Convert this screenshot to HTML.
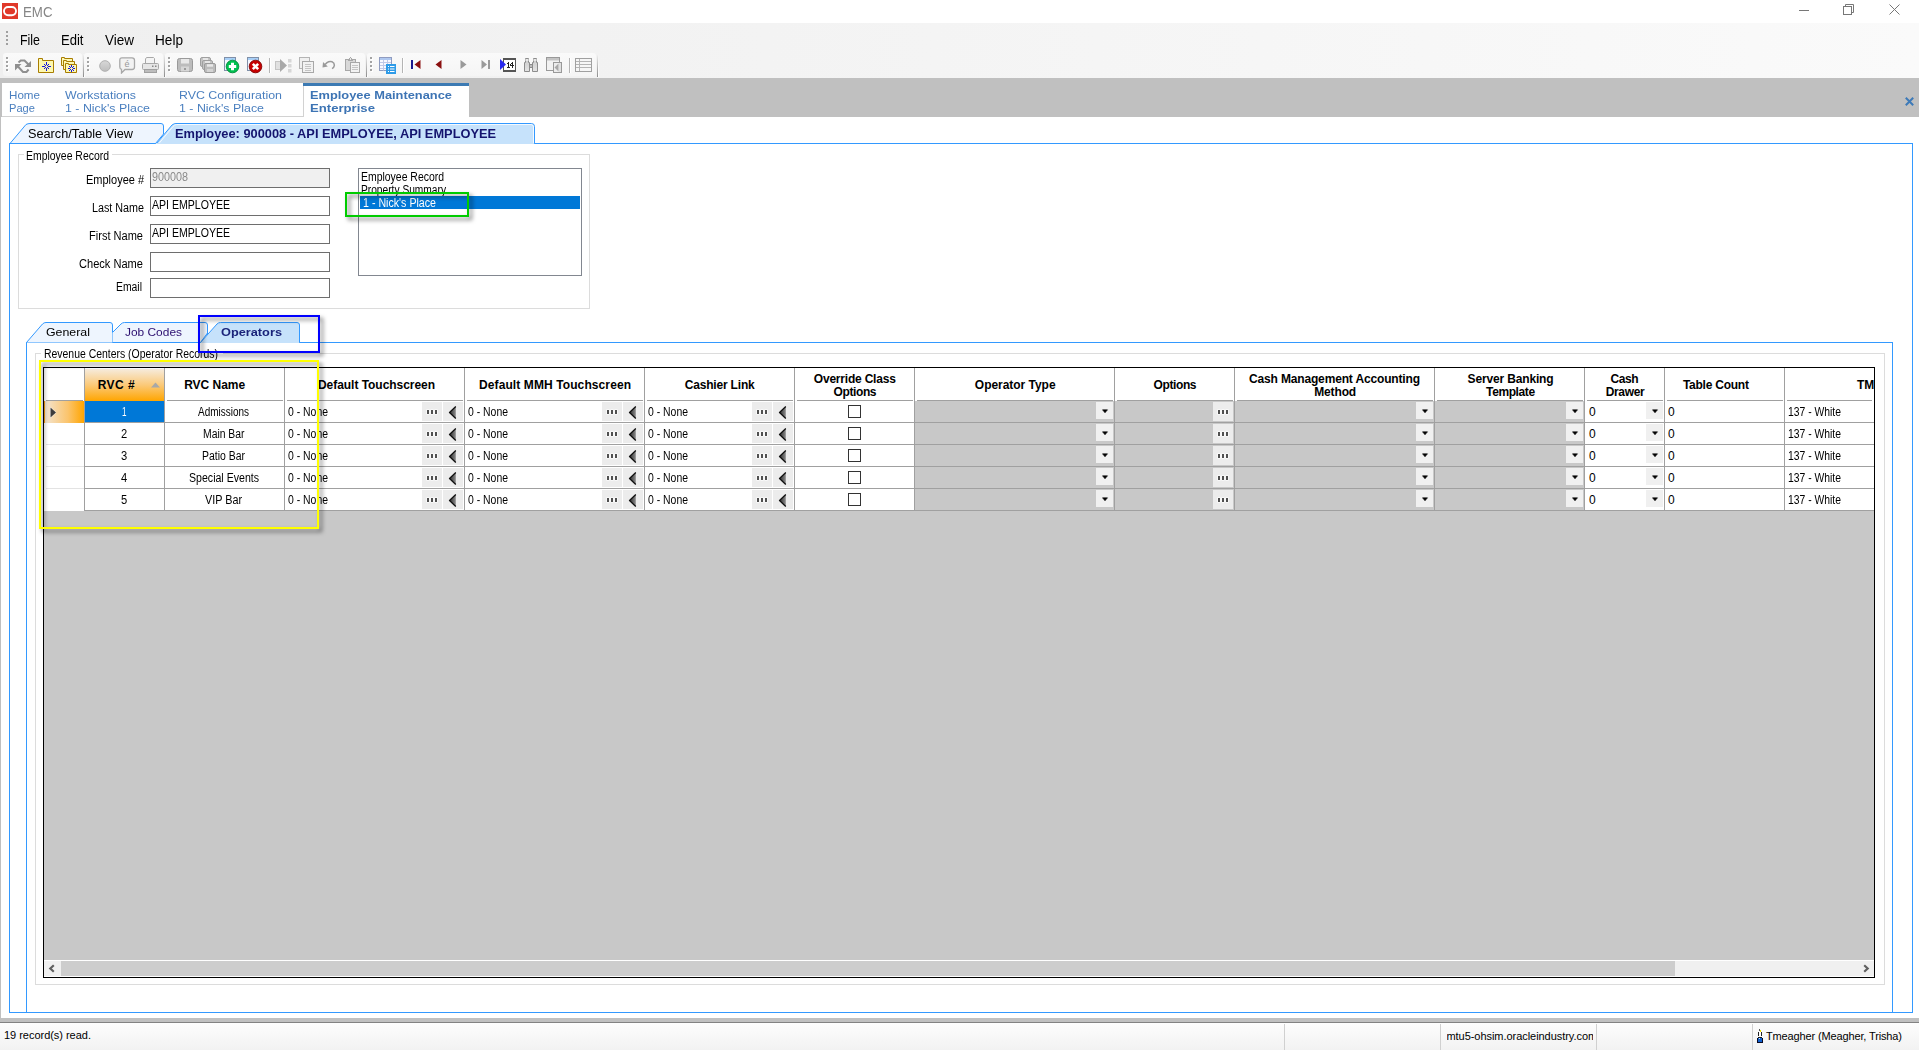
<!DOCTYPE html>
<html><head><meta charset="utf-8"><style>
html,body{margin:0;padding:0;width:1919px;height:1050px;overflow:hidden;background:#fff}
body{position:relative;font-family:"Liberation Sans",sans-serif}
div,span,svg{position:absolute}
.t{white-space:pre;line-height:1;font-family:"Liberation Sans",sans-serif}
</style></head><body>
<div style="left:0px;top:0px;width:1919px;height:23px;background:#fff"></div>
<svg style="position:absolute;left:2px;top:3px" width="16" height="16"><rect x="0" y="0" width="16" height="16" fill="#e0382a"/><rect x="2" y="4" width="12" height="8.2" rx="4.1" fill="none" stroke="#fff" stroke-width="1.9"/></svg>
<span class="t" style="left:23.00px;top:4px;font-size:15px;color:#858585;transform:scaleX(0.8851);transform-origin:0 0;">EMC</span>
<div style="left:1799px;top:10px;width:10px;height:1px;background:#777"></div>
<svg style="position:absolute;left:1843px;top:4px" width="12" height="12"><rect x="0.5" y="2.5" width="8" height="8" fill="none" stroke="#777"/><path d="M2.5 2.5V0.5H10.5V8.5H8.5" fill="none" stroke="#777"/></svg>
<svg style="position:absolute;left:1889px;top:4px" width="12" height="12"><path d="M0.5 0.5L10.5 10.5M10.5 0.5L0.5 10.5" stroke="#777" stroke-width="1"/></svg>
<div style="left:0px;top:23px;width:1919px;height:55px;background:linear-gradient(to right,#efefef,#f3f3f3 40%,#fafafa)"></div>
<div style="left:6px;top:31px;width:2px;height:2px;background:#a0a0a0"></div>
<div style="left:6px;top:35px;width:2px;height:2px;background:#a0a0a0"></div>
<div style="left:6px;top:39px;width:2px;height:2px;background:#a0a0a0"></div>
<div style="left:6px;top:43px;width:2px;height:2px;background:#a0a0a0"></div>
<span class="t" style="left:20.00px;top:33px;font-size:14px;color:#000;transform:scaleX(0.8870);transform-origin:0 0;">File</span>
<span class="t" style="left:61.00px;top:33px;font-size:14px;color:#000;transform:scaleX(0.9326);transform-origin:0 0;">Edit</span>
<span class="t" style="left:105.00px;top:33px;font-size:14px;color:#000;transform:scaleX(0.9637);transform-origin:0 0;">View</span>
<span class="t" style="left:155.00px;top:33px;font-size:14px;color:#000;transform:scaleX(0.9729);transform-origin:0 0;">Help</span>
<div style="left:3px;top:53px;width:79px;height:23px;background:linear-gradient(#fafafa,#f5f5f5);border-radius:3px"></div>
<div style="left:83px;top:54px;width:1px;height:23px;background:linear-gradient(#f4f4f4,#c8c8c8 40%,#8c8c8c)"></div>
<div style="left:84px;top:54px;width:1px;height:23px;background:linear-gradient(rgba(255,255,255,0),#fff)"></div>
<div style="left:84px;top:53px;width:79px;height:23px;background:linear-gradient(#fafafa,#f5f5f5);border-radius:3px"></div>
<div style="left:164px;top:54px;width:1px;height:23px;background:linear-gradient(#f4f4f4,#c8c8c8 40%,#8c8c8c)"></div>
<div style="left:165px;top:54px;width:1px;height:23px;background:linear-gradient(rgba(255,255,255,0),#fff)"></div>
<div style="left:165px;top:53px;width:200px;height:23px;background:linear-gradient(#fafafa,#f5f5f5);border-radius:3px"></div>
<div style="left:366px;top:54px;width:1px;height:23px;background:linear-gradient(#f4f4f4,#c8c8c8 40%,#8c8c8c)"></div>
<div style="left:367px;top:54px;width:1px;height:23px;background:linear-gradient(rgba(255,255,255,0),#fff)"></div>
<div style="left:367px;top:53px;width:229px;height:23px;background:linear-gradient(#fafafa,#f5f5f5);border-radius:3px"></div>
<div style="left:597px;top:54px;width:1px;height:23px;background:linear-gradient(#f4f4f4,#c8c8c8 40%,#8c8c8c)"></div>
<div style="left:598px;top:54px;width:1px;height:23px;background:linear-gradient(rgba(255,255,255,0),#fff)"></div>
<div style="left:7px;top:58px;width:2px;height:2px;background:#fff"></div>
<div style="left:6px;top:57px;width:2px;height:2px;background:#a3a3a3"></div>
<div style="left:7px;top:62px;width:2px;height:2px;background:#fff"></div>
<div style="left:6px;top:61px;width:2px;height:2px;background:#a3a3a3"></div>
<div style="left:7px;top:66px;width:2px;height:2px;background:#fff"></div>
<div style="left:6px;top:65px;width:2px;height:2px;background:#a3a3a3"></div>
<div style="left:7px;top:70px;width:2px;height:2px;background:#fff"></div>
<div style="left:6px;top:69px;width:2px;height:2px;background:#a3a3a3"></div>
<div style="left:88px;top:58px;width:2px;height:2px;background:#fff"></div>
<div style="left:87px;top:57px;width:2px;height:2px;background:#a3a3a3"></div>
<div style="left:88px;top:62px;width:2px;height:2px;background:#fff"></div>
<div style="left:87px;top:61px;width:2px;height:2px;background:#a3a3a3"></div>
<div style="left:88px;top:66px;width:2px;height:2px;background:#fff"></div>
<div style="left:87px;top:65px;width:2px;height:2px;background:#a3a3a3"></div>
<div style="left:88px;top:70px;width:2px;height:2px;background:#fff"></div>
<div style="left:87px;top:69px;width:2px;height:2px;background:#a3a3a3"></div>
<div style="left:169px;top:58px;width:2px;height:2px;background:#fff"></div>
<div style="left:168px;top:57px;width:2px;height:2px;background:#a3a3a3"></div>
<div style="left:169px;top:62px;width:2px;height:2px;background:#fff"></div>
<div style="left:168px;top:61px;width:2px;height:2px;background:#a3a3a3"></div>
<div style="left:169px;top:66px;width:2px;height:2px;background:#fff"></div>
<div style="left:168px;top:65px;width:2px;height:2px;background:#a3a3a3"></div>
<div style="left:169px;top:70px;width:2px;height:2px;background:#fff"></div>
<div style="left:168px;top:69px;width:2px;height:2px;background:#a3a3a3"></div>
<div style="left:371px;top:58px;width:2px;height:2px;background:#fff"></div>
<div style="left:370px;top:57px;width:2px;height:2px;background:#a3a3a3"></div>
<div style="left:371px;top:62px;width:2px;height:2px;background:#fff"></div>
<div style="left:370px;top:61px;width:2px;height:2px;background:#a3a3a3"></div>
<div style="left:371px;top:66px;width:2px;height:2px;background:#fff"></div>
<div style="left:370px;top:65px;width:2px;height:2px;background:#a3a3a3"></div>
<div style="left:371px;top:70px;width:2px;height:2px;background:#fff"></div>
<div style="left:370px;top:69px;width:2px;height:2px;background:#a3a3a3"></div>
<svg style="position:absolute;left:13px;top:57px" width="20" height="18" viewBox="0 0 20 18"><path d="M5.5 5.5L7.8 3.5H11.5L15.5 7.5" fill="none" stroke="#8f8f8f" stroke-width="2"/><path d="M18 4V10H11.5Z" fill="#8f8f8f"/><path d="M5 9.5L10 14.9H13.5L15.6 12.5" fill="none" stroke="#8f8f8f" stroke-width="2"/><path d="M2 7H8.5L2 13.5Z" fill="#8f8f8f"/></svg>
<svg style="position:absolute;left:38px;top:58px" width="16" height="15" viewBox="0 0 16 15"><path d="M0.5 0.5H4.5V2.5H15.5V14.5H0.5Z" fill="#fdf8b0" stroke="#a87d00"/><g fill="#1515e0" shape-rendering="crispEdges"><rect x="8" y="4" width="1" height="1"/><rect x="8" y="5" width="1" height="1"/><rect x="8" y="6" width="1" height="1"/><rect x="8" y="10" width="1" height="1"/><rect x="8" y="11" width="1" height="1"/><rect x="8" y="12" width="1" height="1"/><rect x="4" y="8" width="1" height="1"/><rect x="5" y="8" width="1" height="1"/><rect x="6" y="8" width="1" height="1"/><rect x="10" y="8" width="1" height="1"/><rect x="11" y="8" width="1" height="1"/><rect x="12" y="8" width="1" height="1"/><rect x="6" y="6" width="1" height="1"/><rect x="10" y="6" width="1" height="1"/><rect x="6" y="10" width="1" height="1"/><rect x="10" y="10" width="1" height="1"/><rect x="7" y="7" width="1" height="1"/><rect x="9" y="7" width="1" height="1"/><rect x="7" y="9" width="1" height="1"/><rect x="9" y="9" width="1" height="1"/></g></svg>
<svg style="position:absolute;left:61px;top:57px" width="16" height="16" viewBox="0 0 16 16"><path d="M0.5 0.5H3.5V1.5H11.5V8.5H0.5Z" fill="#fdf8b0" stroke="#a87d00"/><path d="M2.5 3.5H5.5V4.5H13.5V12.5H2.5Z" fill="#fdf8b0" stroke="#a87d00"/><path d="M4.5 6.5H7.5V7.5H15.5V15.5H4.5Z" fill="#fdf8b0" stroke="#a87d00"/><g fill="#1515e0" shape-rendering="crispEdges"><rect x="10" y="8" width="1" height="1"/><rect x="10" y="9" width="1" height="1"/><rect x="10" y="13" width="1" height="1"/><rect x="10" y="14" width="1" height="1"/><rect x="7" y="11" width="1" height="1"/><rect x="8" y="11" width="1" height="1"/><rect x="12" y="11" width="1" height="1"/><rect x="13" y="11" width="1" height="1"/><rect x="8" y="9" width="1" height="1"/><rect x="12" y="9" width="1" height="1"/><rect x="8" y="13" width="1" height="1"/><rect x="12" y="13" width="1" height="1"/><rect x="9" y="10" width="1" height="1"/><rect x="11" y="10" width="1" height="1"/><rect x="9" y="12" width="1" height="1"/><rect x="11" y="12" width="1" height="1"/></g></svg>
<svg style="position:absolute;left:99px;top:60px" width="12" height="12" viewBox="0 0 12 12"><defs><linearGradient id="cg" x1="0" y1="0" x2="0" y2="1"><stop offset="0" stop-color="#d8d8d8"/><stop offset="1" stop-color="#bdbdbd"/></linearGradient></defs><circle cx="6" cy="6" r="5.3" fill="url(#cg)" stroke="#b0b0b0"/></svg>
<svg style="position:absolute;left:119px;top:57px" width="17" height="17" viewBox="0 0 17 17"><path d="M3 0.8H13Q15.5 0.8 15.5 3.3V10Q15.5 12.5 13 12.5H6L2.5 16V12.3Q0.8 12 0.8 10V3.3Q0.8 0.8 3 0.8Z" fill="#f2f2f2" stroke="#a8a8a8" stroke-width="1.3"/><text x="8" y="10" font-size="9" font-family="Liberation Sans" fill="#999" text-anchor="middle">é</text></svg>
<svg style="position:absolute;left:142px;top:57px" width="17" height="17" viewBox="0 0 17 17"><path d="M4.5 0.5H11.5L12.5 1.5V6.5H3.5V2Z" fill="#f4f4f4" stroke="#a8a8a8"/><rect x="0.5" y="6.5" width="16" height="6" rx="1" fill="#e6e6e6" stroke="#a8a8a8"/><rect x="2.5" y="12.5" width="12" height="3" fill="#bdbdbd" stroke="#a0a0a0"/><rect x="10" y="8.5" width="1.5" height="1.5" fill="#888"/><rect x="13" y="8.5" width="1.5" height="1.5" fill="#888"/></svg>
<svg style="position:absolute;left:177px;top:58px" width="16" height="14" viewBox="0 0 16 14"><rect x="0.5" y="0.5" width="15" height="13" rx="2" fill="#bcbcbc" stroke="#9a9a9a"/><rect x="4" y="1" width="8" height="4.5" fill="#e8e8e8"/><rect x="4" y="8.5" width="8" height="5" fill="#d6d6d6"/><rect x="7" y="10" width="2" height="2" fill="#9a9a9a"/></svg>
<svg style="position:absolute;left:200px;top:57px" width="16" height="16" viewBox="0 0 16 16"><rect x="0.5" y="0.5" width="10" height="9" rx="1.5" fill="#c4c4c4" stroke="#a0a0a0"/><rect x="3" y="1" width="5" height="2" fill="#e6e6e6"/><rect x="2.5" y="3.5" width="10" height="9" rx="1.5" fill="#c4c4c4" stroke="#a0a0a0"/><rect x="5" y="4" width="5" height="2" fill="#e6e6e6"/><rect x="4.5" y="6.5" width="11" height="9" rx="1.5" fill="#bcbcbc" stroke="#9a9a9a"/><rect x="7" y="7.2" width="6" height="2.5" fill="#e8e8e8"/><rect x="7" y="12" width="6" height="3" fill="#d4d4d4"/></svg>
<svg style="position:absolute;left:223px;top:57px" width="17" height="17" viewBox="0 0 17 17"><rect x="1.5" y="0.5" width="11" height="13" fill="#f4f6ff" stroke="#8090a8"/><rect x="2" y="1" width="10" height="2" fill="#a8d0f8"/><circle cx="9.5" cy="9.5" r="6.3" fill="#00c050" stroke="#008a3a" stroke-width="0.9"/><path d="M9.5 5.8V13.2M5.8 9.5H13.2" stroke="#fff" stroke-width="3"/></svg>
<svg style="position:absolute;left:246px;top:57px" width="17" height="17" viewBox="0 0 17 17"><rect x="1.5" y="0.5" width="11" height="13" fill="#f4f6ff" stroke="#8090a8"/><rect x="2" y="1" width="10" height="2" fill="#a8d0f8"/><circle cx="9.5" cy="9.5" r="6.3" fill="#c80000" stroke="#800000" stroke-width="0.9"/><path d="M6.8 6.8L12.2 12.2M12.2 6.8L6.8 12.2" stroke="#fff" stroke-width="2.6"/></svg>
<div style="left:269px;top:58px;width:1px;height:15px;background:#b4b4b4"></div>
<div style="left:270px;top:58px;width:1px;height:15px;background:#fff"></div>
<svg style="position:absolute;left:275px;top:58px" width="17" height="15" viewBox="0 0 17 15"><rect x="0.5" y="3.5" width="5" height="8" fill="#e0e0e0" stroke="#c4c4c4"/><path d="M5 1V14L12 7.5Z" fill="#a8a8a8"/><rect x="13" y="1" width="3.5" height="3.5" fill="#d6d6d6"/><rect x="13" y="6" width="3.5" height="3.5" fill="#d6d6d6"/><rect x="13" y="11" width="3.5" height="3.5" fill="#d6d6d6"/></svg>
<svg style="position:absolute;left:299px;top:57px" width="15" height="16" viewBox="0 0 15 16"><g shape-rendering="crispEdges"><rect x="0.5" y="0.5" width="10" height="11" fill="#f0f0f0" stroke="#b4b4b4"/><rect x="3.5" y="4.5" width="11" height="11" fill="#f2f2f2" stroke="#a8a8a8"/><path d="M6 7.5H12M6 9.5H12M6 11.5H12M6 13.5H12" stroke="#c4c4c4"/></g></svg>
<svg style="position:absolute;left:322px;top:60px" width="14" height="10" viewBox="0 0 14 10"><path d="M3 4.5L5 2.6Q7.5 0.8 10.2 1.8Q12.6 3 12.3 5.6Q12 7.6 10 8.6" fill="none" stroke="#9a9a9a" stroke-width="1.5"/><path d="M0.5 7.5L1 2L5.8 6.5Z" fill="#9a9a9a"/></svg>
<svg style="position:absolute;left:345px;top:57px" width="15" height="16" viewBox="0 0 15 16"><g shape-rendering="crispEdges"><rect x="0.5" y="2.5" width="10" height="11" fill="#d8d8d8" stroke="#a8a8a8"/><path d="M3.5 3.5L5.5 0.5L7.5 3.5Z" fill="#e8e8e8" stroke="#a8a8a8"/><rect x="5.5" y="5.5" width="9" height="10" fill="#f2f2f2" stroke="#a8a8a8"/><path d="M7 8.5H13M7 10.5H13M7 12.5H13" stroke="#c4c4c4"/></g></svg>
<svg style="position:absolute;left:379px;top:57px" width="17" height="17" viewBox="0 0 17 17"><rect x="0.5" y="0.5" width="12" height="13" fill="#f8f8ff" stroke="#909cc0"/><rect x="1" y="1" width="11" height="2" fill="#b0c8f0"/><path d="M1 5.5H12M1 8.5H12M1 11.5H12M4.5 3V13.5M8.5 3V13.5" stroke="#c0c8e8"/><rect x="7" y="7" width="10" height="10" fill="#2e9be8"/><path d="M9 9.5H10M11 9.5H15.5M9 12H10M11 12H15.5M9 14.5H10M11 14.5H15.5" stroke="#fff" stroke-width="1.2"/></svg>
<div style="left:402px;top:58px;width:1px;height:15px;background:#b4b4b4"></div>
<div style="left:403px;top:58px;width:1px;height:15px;background:#fff"></div>
<svg style="position:absolute;left:411px;top:60px" width="10" height="9" viewBox="0 0 10 9"><rect x="0" y="0" width="2" height="9" fill="#1a1a90"/><path d="M9.5 0V9L3.5 4.5Z" fill="#8a1010"/></svg>
<svg style="position:absolute;left:435px;top:60px" width="7" height="9" viewBox="0 0 7 9"><path d="M6.5 0V9L0.5 4.5Z" fill="#8a1010"/></svg>
<svg style="position:absolute;left:460px;top:60px" width="7" height="9" viewBox="0 0 7 9"><path d="M0.5 0V9L6.5 4.5Z" fill="#9a9a9a"/></svg>
<svg style="position:absolute;left:481px;top:60px" width="9" height="9" viewBox="0 0 9 9"><path d="M0.5 0V9L6 4.5Z" fill="#9a9a9a"/><rect x="7" y="0" width="2" height="9" fill="#9a9a9a"/></svg>
<svg style="position:absolute;left:500px;top:57px" width="17" height="16" viewBox="0 0 17 16"><rect x="3.5" y="1.5" width="12" height="13" fill="#fff" stroke="#555"/><rect x="3" y="1" width="13" height="2" fill="#555"/><rect x="3" y="13" width="13" height="2" fill="#555"/><path d="M0 2L6 7.5L0 13Z" fill="#2a2af0"/><g fill="#222" shape-rendering="crispEdges"><rect x="8" y="5" width="1" height="6"/><rect x="7" y="6" width="1" height="1"/><rect x="7" y="10" width="3" height="1"/><rect x="12" y="5" width="1" height="6"/><rect x="11" y="6" width="1" height="1"/><rect x="10" y="7" width="1" height="2"/><rect x="10" y="8" width="4" height="1"/></g></svg>
<svg style="position:absolute;left:524px;top:57px" width="15" height="16" viewBox="0 0 15 16"><defs><linearGradient id="bg1" x1="0" x2="0" y1="0" y2="1"><stop offset="0" stop-color="#c8c8c8"/><stop offset="1" stop-color="#e4e4e4"/></linearGradient></defs><path d="M1.5 1.5H4.5V5.5H5.5V14.5H0.5V5.5H1.5Z" fill="url(#bg1)" stroke="#8c8c8c"/><path d="M9.5 1.5H12.5V5.5H13.5V14.5H8.5V5.5H9.5Z" fill="url(#bg1)" stroke="#8c8c8c"/><rect x="5.5" y="7.5" width="3" height="3" fill="#bdbdbd" stroke="#8c8c8c"/><rect x="1.5" y="2" width="3" height="2" fill="#e8e8e8"/><rect x="9.5" y="2" width="3" height="2" fill="#e8e8e8"/></svg>
<svg style="position:absolute;left:546px;top:57px" width="16" height="16" viewBox="0 0 16 16"><rect x="0.5" y="0.5" width="13" height="13" fill="#f2f2f2" stroke="#999"/><rect x="1" y="1" width="12" height="2.5" fill="#c4c4c4"/><rect x="7.5" y="5.5" width="8" height="10" fill="#ececec" stroke="#999"/><path d="M12.5 6.5V14.5L8.5 10.5Z" fill="#a8a8a8"/><rect x="13" y="6" width="2" height="9" fill="#e0e0e0"/></svg>
<div style="left:569px;top:58px;width:1px;height:15px;background:#b4b4b4"></div>
<div style="left:570px;top:58px;width:1px;height:15px;background:#fff"></div>
<svg style="position:absolute;left:575px;top:58px" width="17" height="14" viewBox="0 0 17 14"><rect x="0.5" y="0.5" width="16" height="13" fill="#f6f6f6" stroke="#a0a0a0"/><path d="M1 3.5H16M1 6.5H16M1 9.5H16M4.5 1V13" stroke="#b4b4b4"/></svg>
<div style="left:0px;top:78px;width:1919px;height:39px;background:#c0c0c0"></div>
<div style="left:2px;top:83px;width:301px;height:33px;background:#fff"></div>
<div style="left:2px;top:116px;width:302px;height:1px;background:#d2d2d2"></div>
<div style="left:304px;top:83px;width:165px;height:34px;background:#fff"></div>
<div style="left:303px;top:86px;width:1px;height:31px;background:#d2d2d2"></div>
<div style="left:303px;top:83px;width:166px;height:3px;background:#3c7ab3"></div>
<span class="t" style="left:9.00px;top:90px;font-size:11px;color:#4a7fbf;transform:scaleX(1.0564);transform-origin:0 0;">Home</span>
<span class="t" style="left:9.00px;top:103px;font-size:11px;color:#4a7fbf;transform:scaleX(1.0109);transform-origin:0 0;">Page</span>
<span class="t" style="left:65.00px;top:90px;font-size:11px;color:#4a7fbf;transform:scaleX(1.1200);transform-origin:0 0;">Workstations</span>
<span class="t" style="left:65.00px;top:103px;font-size:11px;color:#4a7fbf;transform:scaleX(1.1263);transform-origin:0 0;">1 - Nick's Place</span>
<span class="t" style="left:179.00px;top:90px;font-size:11px;color:#4a7fbf;transform:scaleX(1.1251);transform-origin:0 0;">RVC Configuration</span>
<span class="t" style="left:179.00px;top:103px;font-size:11px;color:#4a7fbf;transform:scaleX(1.1263);transform-origin:0 0;">1 - Nick's Place</span>
<span class="t" style="left:310.00px;top:90px;font-size:11px;color:#3d74b4;font-weight:bold;transform:scaleX(1.1666);transform-origin:0 0;">Employee Maintenance</span>
<span class="t" style="left:310.00px;top:103px;font-size:11px;color:#3d74b4;font-weight:bold;transform:scaleX(1.1940);transform-origin:0 0;">Enterprise</span>
<svg style="position:absolute;left:1905px;top:97px" width="10" height="10" viewBox="0 0 10 10"><path d="M0.8 0.8L8.2 8.2M8.2 0.8L0.8 8.2" stroke="#3d7ab8" stroke-width="2"/></svg>
<div style="left:0px;top:117px;width:1919px;height:901px;background:#fff"></div>
<div style="left:0px;top:117px;width:1px;height:901px;background:#c0c0c0"></div>
<div style="left:0px;top:1018px;width:1919px;height:4px;background:#c0c0c0"></div>
<div style="left:0px;top:1022px;width:1919px;height:1px;background:#828282"></div>
<div style="left:9px;top:143px;width:1904px;height:870px;border:1px solid #3399ff;box-sizing:border-box"></div>
<svg style="position:absolute;left:8px;top:121px" width="530" height="24" viewBox="0 0 530 24">
<path d="M2 22.5 L18 3.5 Q20 2.5 22 2.5 H153 Q155.5 2.5 155.5 5 V13 L147.5 22.5 Z" fill="#eef5fe" stroke="#3399ff" stroke-width="1"/>
<path d="M148.5 22.5 L164 4 Q166 2.5 168 2.5 H523.5 Q526.5 2.5 526.5 5.5 V22.5" fill="#c6e2fb" stroke="#3399ff" stroke-width="1"/>
<path d="M150.5 23 L165 5.5 Q166.5 3.5 168.5 3.5 H523 Q525.5 3.5 525.5 6 V23" fill="none" stroke="#fff" stroke-width="1" opacity="0.8"/>
<rect x="148" y="22" width="378" height="1" fill="#c6e2fb"/>
</svg>
<div style="left:156px;top:143px;width:378px;height:1px;background:#c6e2fb"></div>
<span class="t" style="left:28.00px;top:128px;font-size:12px;color:#000;transform:scaleX(1.0589);transform-origin:0 0;">Search/Table View</span>
<span class="t" style="left:175.00px;top:128px;font-size:12px;color:#14146e;font-weight:bold;transform:scaleX(1.0684);transform-origin:0 0;">Employee: 900008 - API EMPLOYEE, API EMPLOYEE</span>
<div style="left:18px;top:154px;width:572px;height:155px;border:1px solid #dcdcdc;box-sizing:border-box"></div>
<div style="left:24px;top:148px;width:88px;height:12px;background:#fff"></div>
<span class="t" style="left:26.00px;top:150px;font-size:12px;color:#000;transform:scaleX(0.8702);transform-origin:0 0;">Employee Record</span>
<span class="t" style="left:85.50px;top:174px;font-size:12px;color:#000;transform:scaleX(0.9154);transform-origin:0 0;">Employee #</span>
<span class="t" style="left:92.00px;top:202px;font-size:12px;color:#000;transform:scaleX(0.8963);transform-origin:0 0;">Last Name</span>
<span class="t" style="left:88.50px;top:230px;font-size:12px;color:#000;transform:scaleX(0.9204);transform-origin:0 0;">First Name</span>
<span class="t" style="left:78.50px;top:258px;font-size:12px;color:#000;transform:scaleX(0.9227);transform-origin:0 0;">Check Name</span>
<span class="t" style="left:115.50px;top:281px;font-size:12px;color:#000;transform:scaleX(0.8662);transform-origin:0 0;">Email</span>
<div style="left:150px;top:168px;width:180px;height:20px;background:#f0f0f0;border:1px solid #6e6e6e;box-sizing:border-box"></div>
<div style="left:150px;top:196px;width:180px;height:20px;background:#fff;border:1px solid #6e6e6e;box-sizing:border-box"></div>
<div style="left:150px;top:224px;width:180px;height:20px;background:#fff;border:1px solid #6e6e6e;box-sizing:border-box"></div>
<div style="left:150px;top:252px;width:180px;height:20px;background:#fff;border:1px solid #6e6e6e;box-sizing:border-box"></div>
<div style="left:150px;top:278px;width:180px;height:20px;background:#fff;border:1px solid #6e6e6e;box-sizing:border-box"></div>
<span class="t" style="left:152.00px;top:171px;font-size:12px;color:#8a8a8a;transform:scaleX(0.8993);transform-origin:0 0;">900008</span>
<span class="t" style="left:152.00px;top:199px;font-size:12px;color:#000;transform:scaleX(0.8798);transform-origin:0 0;">API EMPLOYEE</span>
<span class="t" style="left:152.00px;top:227px;font-size:12px;color:#000;transform:scaleX(0.8798);transform-origin:0 0;">API EMPLOYEE</span>
<div style="left:358px;top:168px;width:224px;height:108px;background:#fff;border:1px solid #828790;box-sizing:border-box;overflow:hidden"></div>
<span class="t" style="left:361.00px;top:171px;font-size:12px;color:#000;transform:scaleX(0.8702);transform-origin:0 0;">Employee Record</span>
<span class="t" style="left:361.00px;top:184px;font-size:12px;color:#000;transform:scaleX(0.8499);transform-origin:0 0;">Property Summary</span>
<div style="left:360px;top:196px;width:220px;height:13px;background:#0078d7"></div>
<span class="t" style="left:363.00px;top:197px;font-size:12px;color:#fff;transform:scaleX(0.8869);transform-origin:0 0;">1 - Nick's Place</span>
<div style="left:26px;top:342px;width:1867px;height:671px;border:1px solid #3399ff;border-bottom:none;box-sizing:border-box"></div>
<svg style="position:absolute;left:24px;top:320px" width="280" height="24" viewBox="0 0 280 24">
<path d="M2.5 22.5 L18.5 4 Q20 2.5 22 2.5 H86 Q88.5 2.5 88.5 5 V22.5" fill="#eef5fe" stroke="#3399ff"/>
<path d="M88.5 12.5 L97 4 Q98.5 2.5 100.5 2.5 H181 Q183.5 2.5 183.5 5 V22.5 H88.5" fill="#eef5fe" stroke="#3399ff"/>
<path d="M183.5 13 L176.5 22.5" fill="none" stroke="#3399ff"/>
<path d="M176.5 22.5 L193 4 Q194.5 2.5 196.5 2.5 H273 Q275.5 2.5 275.5 5 V22.5" fill="#c6e2fb" stroke="#3399ff"/>
<rect x="177" y="22" width="98" height="1" fill="#c6e2fb"/>
</svg>
<span class="t" style="left:46.00px;top:327px;font-size:11px;color:#000;transform:scaleX(1.1237);transform-origin:0 0;">General</span>
<span class="t" style="left:125.00px;top:327px;font-size:11px;color:#2c0f70;transform:scaleX(1.0831);transform-origin:0 0;">Job Codes</span>
<span class="t" style="left:221.00px;top:327px;font-size:11px;color:#1a237a;font-weight:bold;transform:scaleX(1.1598);transform-origin:0 0;">Operators</span>
<div style="left:35px;top:353px;width:1850px;height:632px;border:1px solid #dcdcdc;box-sizing:border-box"></div>
<div style="left:41px;top:347px;width:182px;height:12px;background:#fff"></div>
<span class="t" style="left:44.00px;top:348px;font-size:12px;color:#000;transform:scaleX(0.8697);transform-origin:0 0;">Revenue Centers (Operator Records)</span>
<div style="left:43px;top:367px;width:1832px;height:611px;background:#c8c8c8;border:1px solid #000;box-sizing:border-box"></div>
<div style="left:44px;top:368px;width:1830px;height:33px;background:#fff"></div>
<div style="left:44px;top:401px;width:1830px;height:110px;background:#fff"></div>
<div style="left:915px;top:401px;width:199px;height:110px;background:#c8c8c8"></div>
<div style="left:1115px;top:401px;width:119px;height:110px;background:#c8c8c8"></div>
<div style="left:1235px;top:401px;width:199px;height:110px;background:#c8c8c8"></div>
<div style="left:1435px;top:401px;width:149px;height:110px;background:#c8c8c8"></div>
<div style="left:85px;top:369px;width:79px;height:32px;background:linear-gradient(#f6ebdc,#fbc978 50%,#ffa500)"></div>
<div style="left:46px;top:400px;width:37px;height:1px;background:#a0a0a0"></div>
<div style="left:167px;top:400px;width:116px;height:1px;background:#a0a0a0"></div>
<div style="left:287px;top:400px;width:176px;height:1px;background:#a0a0a0"></div>
<div style="left:467px;top:400px;width:176px;height:1px;background:#a0a0a0"></div>
<div style="left:647px;top:400px;width:146px;height:1px;background:#a0a0a0"></div>
<div style="left:797px;top:400px;width:116px;height:1px;background:#a0a0a0"></div>
<div style="left:917px;top:400px;width:196px;height:1px;background:#a0a0a0"></div>
<div style="left:1117px;top:400px;width:116px;height:1px;background:#a0a0a0"></div>
<div style="left:1237px;top:400px;width:196px;height:1px;background:#a0a0a0"></div>
<div style="left:1437px;top:400px;width:146px;height:1px;background:#a0a0a0"></div>
<div style="left:1587px;top:400px;width:76px;height:1px;background:#a0a0a0"></div>
<div style="left:1667px;top:400px;width:116px;height:1px;background:#a0a0a0"></div>
<div style="left:1787px;top:400px;width:85px;height:1px;background:#a0a0a0"></div>
<div style="left:84px;top:368px;width:1px;height:143px;background:#a0a0a0"></div>
<div style="left:164px;top:368px;width:1px;height:143px;background:#a0a0a0"></div>
<div style="left:284px;top:368px;width:1px;height:143px;background:#a0a0a0"></div>
<div style="left:464px;top:368px;width:1px;height:143px;background:#a0a0a0"></div>
<div style="left:644px;top:368px;width:1px;height:143px;background:#a0a0a0"></div>
<div style="left:794px;top:368px;width:1px;height:143px;background:#a0a0a0"></div>
<div style="left:914px;top:368px;width:1px;height:143px;background:#a0a0a0"></div>
<div style="left:1114px;top:368px;width:1px;height:143px;background:#a0a0a0"></div>
<div style="left:1234px;top:368px;width:1px;height:143px;background:#a0a0a0"></div>
<div style="left:1434px;top:368px;width:1px;height:143px;background:#a0a0a0"></div>
<div style="left:1584px;top:368px;width:1px;height:143px;background:#a0a0a0"></div>
<div style="left:1664px;top:368px;width:1px;height:143px;background:#a0a0a0"></div>
<div style="left:1784px;top:368px;width:1px;height:143px;background:#a0a0a0"></div>
<div style="left:85px;top:422px;width:1789px;height:1px;background:#a0a0a0"></div>
<div style="left:85px;top:444px;width:1789px;height:1px;background:#a0a0a0"></div>
<div style="left:46px;top:444px;width:38px;height:1px;background:#e3e3e3"></div>
<div style="left:85px;top:466px;width:1789px;height:1px;background:#a0a0a0"></div>
<div style="left:46px;top:466px;width:38px;height:1px;background:#e3e3e3"></div>
<div style="left:85px;top:488px;width:1789px;height:1px;background:#a0a0a0"></div>
<div style="left:46px;top:488px;width:38px;height:1px;background:#e3e3e3"></div>
<div style="left:85px;top:510px;width:1789px;height:1px;background:#a0a0a0"></div>
<div style="left:44px;top:401px;width:40px;height:22px;background:linear-gradient(to right,#f2e6d6,#fbc46c 60%,#ffa500)"></div>
<div style="left:44px;top:401px;width:1px;height:22px;background:#f39c12"></div>
<svg style="position:absolute;left:49px;top:406px" width="9" height="13" viewBox="0 0 9 13"><path d="M1.5 1.5V11.5L7 6.5Z" fill="#3c3c3c" stroke="#fff" stroke-width="0.8" paint-order="stroke"/></svg>
<div style="left:85px;top:401px;width:79px;height:21px;background:#0078d7"></div>
<svg style="position:absolute;left:151px;top:382px" width="10" height="6" viewBox="0 0 10 6"><path d="M0 5.5L4.5 0.5L9 5.5Z" fill="#a8a8a8"/></svg>
<span class="t" style="left:97.70px;top:379px;font-size:12px;color:#000;font-weight:bold;letter-spacing:0.469px;">RVC #</span>
<span class="t" style="left:184.20px;top:379px;font-size:12px;color:#000;font-weight:bold;letter-spacing:-0.020px;">RVC Name</span>
<span class="t" style="left:318.00px;top:379px;font-size:12px;color:#000;font-weight:bold;letter-spacing:-0.043px;">Default Touchscreen</span>
<span class="t" style="left:479.00px;top:379px;font-size:12px;color:#000;font-weight:bold;letter-spacing:0.101px;">Default MMH Touchscreen</span>
<span class="t" style="left:684.70px;top:379px;font-size:12px;color:#000;font-weight:bold;letter-spacing:-0.182px;">Cashier Link</span>
<span class="t" style="left:813.80px;top:373px;font-size:12px;color:#000;font-weight:bold;letter-spacing:-0.207px;">Override Class</span>
<span class="t" style="left:833.50px;top:386px;font-size:12px;color:#000;font-weight:bold;letter-spacing:-0.385px;">Options</span>
<span class="t" style="left:974.85px;top:379px;font-size:12px;color:#000;font-weight:bold;letter-spacing:-0.034px;">Operator Type</span>
<span class="t" style="left:1153.50px;top:379px;font-size:12px;color:#000;font-weight:bold;letter-spacing:-0.385px;">Options</span>
<span class="t" style="left:1249.00px;top:373px;font-size:12px;color:#000;font-weight:bold;letter-spacing:-0.156px;">Cash Management Accounting</span>
<span class="t" style="left:1314.20px;top:386px;font-size:12px;color:#000;font-weight:bold;letter-spacing:-0.131px;">Method</span>
<span class="t" style="left:1467.60px;top:373px;font-size:12px;color:#000;font-weight:bold;letter-spacing:-0.155px;">Server Banking</span>
<span class="t" style="left:1486.10px;top:386px;font-size:12px;color:#000;font-weight:bold;letter-spacing:-0.397px;">Template</span>
<span class="t" style="left:1610.50px;top:373px;font-size:12px;color:#000;font-weight:bold;letter-spacing:-0.448px;">Cash</span>
<span class="t" style="left:1605.70px;top:386px;font-size:12px;color:#000;font-weight:bold;letter-spacing:-0.338px;">Drawer</span>
<span class="t" style="left:1682.90px;top:379px;font-size:12px;color:#000;font-weight:bold;letter-spacing:-0.242px;">Table Count</span>
<div style="left:1785px;top:368px;width:89px;height:32px;overflow:hidden"><span class="t" style="left:72px;top:11px;font-size:12px;font-weight:bold">TM</span></div>
<span class="t" style="left:121.75px;top:406px;font-size:12px;color:#fff;transform:scaleX(0.6745);transform-origin:0 0;">1</span>
<span class="t" style="left:198.00px;top:406px;font-size:12px;color:#000;transform:scaleX(0.8312);transform-origin:0 0;">Admissions</span>
<span class="t" style="left:288.00px;top:406px;font-size:12px;color:#000;transform:scaleX(0.8693);transform-origin:0 0;">0 - None</span>
<div style="left:422px;top:402px;width:20px;height:19px;background:#ececec"></div>
<div style="left:427px;top:410px;width:2px;height:4px;background:#505050;box-shadow:0 0 0 0.6px #fff"></div>
<div style="left:431px;top:410px;width:2px;height:4px;background:#505050;box-shadow:0 0 0 0.6px #fff"></div>
<div style="left:435px;top:410px;width:2px;height:4px;background:#505050;box-shadow:0 0 0 0.6px #fff"></div>
<div style="left:443px;top:402px;width:20px;height:19px;background:#ececec"></div>
<svg style="position:absolute;left:448px;top:405px" width="9" height="15" viewBox="0 0 9 15"><defs><linearGradient id="ag" x1="0" x2="1"><stop offset="0" stop-color="#2a2a2a"/><stop offset="1" stop-color="#8c8c8c"/></linearGradient></defs><path d="M1.5 7.5L7.8 1.5V13.5Z" fill="url(#ag)"/><path d="M7.8 1.5L1.5 7.5L7.8 13.5" fill="none" stroke="#111" stroke-width="1.3" stroke-linejoin="round"/></svg>
<span class="t" style="left:468.00px;top:406px;font-size:12px;color:#000;transform:scaleX(0.8693);transform-origin:0 0;">0 - None</span>
<div style="left:602px;top:402px;width:20px;height:19px;background:#ececec"></div>
<div style="left:607px;top:410px;width:2px;height:4px;background:#505050;box-shadow:0 0 0 0.6px #fff"></div>
<div style="left:611px;top:410px;width:2px;height:4px;background:#505050;box-shadow:0 0 0 0.6px #fff"></div>
<div style="left:615px;top:410px;width:2px;height:4px;background:#505050;box-shadow:0 0 0 0.6px #fff"></div>
<div style="left:623px;top:402px;width:20px;height:19px;background:#ececec"></div>
<svg style="position:absolute;left:628px;top:405px" width="9" height="15" viewBox="0 0 9 15"><defs><linearGradient id="ag" x1="0" x2="1"><stop offset="0" stop-color="#2a2a2a"/><stop offset="1" stop-color="#8c8c8c"/></linearGradient></defs><path d="M1.5 7.5L7.8 1.5V13.5Z" fill="url(#ag)"/><path d="M7.8 1.5L1.5 7.5L7.8 13.5" fill="none" stroke="#111" stroke-width="1.3" stroke-linejoin="round"/></svg>
<span class="t" style="left:648.00px;top:406px;font-size:12px;color:#000;transform:scaleX(0.8693);transform-origin:0 0;">0 - None</span>
<div style="left:752px;top:402px;width:20px;height:19px;background:#ececec"></div>
<div style="left:757px;top:410px;width:2px;height:4px;background:#505050;box-shadow:0 0 0 0.6px #fff"></div>
<div style="left:761px;top:410px;width:2px;height:4px;background:#505050;box-shadow:0 0 0 0.6px #fff"></div>
<div style="left:765px;top:410px;width:2px;height:4px;background:#505050;box-shadow:0 0 0 0.6px #fff"></div>
<div style="left:773px;top:402px;width:20px;height:19px;background:#ececec"></div>
<svg style="position:absolute;left:778px;top:405px" width="9" height="15" viewBox="0 0 9 15"><defs><linearGradient id="ag" x1="0" x2="1"><stop offset="0" stop-color="#2a2a2a"/><stop offset="1" stop-color="#8c8c8c"/></linearGradient></defs><path d="M1.5 7.5L7.8 1.5V13.5Z" fill="url(#ag)"/><path d="M7.8 1.5L1.5 7.5L7.8 13.5" fill="none" stroke="#111" stroke-width="1.3" stroke-linejoin="round"/></svg>
<div style="left:848px;top:405px;width:13px;height:13px;background:#fff;border:1px solid #333;box-sizing:border-box"></div>
<div style="left:1096px;top:402px;width:17px;height:17px;background:#f0f0f0"></div>
<svg style="position:absolute;left:1102px;top:409px" width="7" height="5" viewBox="0 0 7 5"><path d="M0.5 0.8H5.5L3 3.8Z" fill="#000" stroke="#000" stroke-width="0.6"/></svg>
<div style="left:1213px;top:402px;width:20px;height:19px;background:#ececec"></div>
<div style="left:1218px;top:410px;width:2px;height:4px;background:#505050;box-shadow:0 0 0 0.6px #fff"></div>
<div style="left:1222px;top:410px;width:2px;height:4px;background:#505050;box-shadow:0 0 0 0.6px #fff"></div>
<div style="left:1226px;top:410px;width:2px;height:4px;background:#505050;box-shadow:0 0 0 0.6px #fff"></div>
<div style="left:1416px;top:402px;width:17px;height:17px;background:#f0f0f0"></div>
<svg style="position:absolute;left:1422px;top:409px" width="7" height="5" viewBox="0 0 7 5"><path d="M0.5 0.8H5.5L3 3.8Z" fill="#000" stroke="#000" stroke-width="0.6"/></svg>
<div style="left:1566px;top:402px;width:17px;height:17px;background:#f0f0f0"></div>
<svg style="position:absolute;left:1572px;top:409px" width="7" height="5" viewBox="0 0 7 5"><path d="M0.5 0.8H5.5L3 3.8Z" fill="#000" stroke="#000" stroke-width="0.6"/></svg>
<div style="left:1646px;top:402px;width:17px;height:17px;background:#f0f0f0"></div>
<svg style="position:absolute;left:1652px;top:409px" width="7" height="5" viewBox="0 0 7 5"><path d="M0.5 0.8H5.5L3 3.8Z" fill="#000" stroke="#000" stroke-width="0.6"/></svg>
<span class="t" style="left:1589.00px;top:406px;font-size:12px;color:#000;">0</span>
<span class="t" style="left:1668.00px;top:406px;font-size:12px;color:#000;">0</span>
<span class="t" style="left:1788.00px;top:406px;font-size:12px;color:#000;transform:scaleX(0.8640);transform-origin:0 0;">137 - White</span>
<span class="t" style="left:120.90px;top:428px;font-size:12px;color:#000;transform:scaleX(0.9293);transform-origin:0 0;">2</span>
<span class="t" style="left:202.75px;top:428px;font-size:12px;color:#000;transform:scaleX(0.8643);transform-origin:0 0;">Main Bar</span>
<span class="t" style="left:288.00px;top:428px;font-size:12px;color:#000;transform:scaleX(0.8693);transform-origin:0 0;">0 - None</span>
<div style="left:422px;top:424px;width:20px;height:19px;background:#ececec"></div>
<div style="left:427px;top:432px;width:2px;height:4px;background:#505050;box-shadow:0 0 0 0.6px #fff"></div>
<div style="left:431px;top:432px;width:2px;height:4px;background:#505050;box-shadow:0 0 0 0.6px #fff"></div>
<div style="left:435px;top:432px;width:2px;height:4px;background:#505050;box-shadow:0 0 0 0.6px #fff"></div>
<div style="left:443px;top:424px;width:20px;height:19px;background:#ececec"></div>
<svg style="position:absolute;left:448px;top:427px" width="9" height="15" viewBox="0 0 9 15"><defs><linearGradient id="ag" x1="0" x2="1"><stop offset="0" stop-color="#2a2a2a"/><stop offset="1" stop-color="#8c8c8c"/></linearGradient></defs><path d="M1.5 7.5L7.8 1.5V13.5Z" fill="url(#ag)"/><path d="M7.8 1.5L1.5 7.5L7.8 13.5" fill="none" stroke="#111" stroke-width="1.3" stroke-linejoin="round"/></svg>
<span class="t" style="left:468.00px;top:428px;font-size:12px;color:#000;transform:scaleX(0.8693);transform-origin:0 0;">0 - None</span>
<div style="left:602px;top:424px;width:20px;height:19px;background:#ececec"></div>
<div style="left:607px;top:432px;width:2px;height:4px;background:#505050;box-shadow:0 0 0 0.6px #fff"></div>
<div style="left:611px;top:432px;width:2px;height:4px;background:#505050;box-shadow:0 0 0 0.6px #fff"></div>
<div style="left:615px;top:432px;width:2px;height:4px;background:#505050;box-shadow:0 0 0 0.6px #fff"></div>
<div style="left:623px;top:424px;width:20px;height:19px;background:#ececec"></div>
<svg style="position:absolute;left:628px;top:427px" width="9" height="15" viewBox="0 0 9 15"><defs><linearGradient id="ag" x1="0" x2="1"><stop offset="0" stop-color="#2a2a2a"/><stop offset="1" stop-color="#8c8c8c"/></linearGradient></defs><path d="M1.5 7.5L7.8 1.5V13.5Z" fill="url(#ag)"/><path d="M7.8 1.5L1.5 7.5L7.8 13.5" fill="none" stroke="#111" stroke-width="1.3" stroke-linejoin="round"/></svg>
<span class="t" style="left:648.00px;top:428px;font-size:12px;color:#000;transform:scaleX(0.8693);transform-origin:0 0;">0 - None</span>
<div style="left:752px;top:424px;width:20px;height:19px;background:#ececec"></div>
<div style="left:757px;top:432px;width:2px;height:4px;background:#505050;box-shadow:0 0 0 0.6px #fff"></div>
<div style="left:761px;top:432px;width:2px;height:4px;background:#505050;box-shadow:0 0 0 0.6px #fff"></div>
<div style="left:765px;top:432px;width:2px;height:4px;background:#505050;box-shadow:0 0 0 0.6px #fff"></div>
<div style="left:773px;top:424px;width:20px;height:19px;background:#ececec"></div>
<svg style="position:absolute;left:778px;top:427px" width="9" height="15" viewBox="0 0 9 15"><defs><linearGradient id="ag" x1="0" x2="1"><stop offset="0" stop-color="#2a2a2a"/><stop offset="1" stop-color="#8c8c8c"/></linearGradient></defs><path d="M1.5 7.5L7.8 1.5V13.5Z" fill="url(#ag)"/><path d="M7.8 1.5L1.5 7.5L7.8 13.5" fill="none" stroke="#111" stroke-width="1.3" stroke-linejoin="round"/></svg>
<div style="left:848px;top:427px;width:13px;height:13px;background:#fff;border:1px solid #333;box-sizing:border-box"></div>
<div style="left:1096px;top:424px;width:17px;height:17px;background:#f0f0f0"></div>
<svg style="position:absolute;left:1102px;top:431px" width="7" height="5" viewBox="0 0 7 5"><path d="M0.5 0.8H5.5L3 3.8Z" fill="#000" stroke="#000" stroke-width="0.6"/></svg>
<div style="left:1213px;top:424px;width:20px;height:19px;background:#ececec"></div>
<div style="left:1218px;top:432px;width:2px;height:4px;background:#505050;box-shadow:0 0 0 0.6px #fff"></div>
<div style="left:1222px;top:432px;width:2px;height:4px;background:#505050;box-shadow:0 0 0 0.6px #fff"></div>
<div style="left:1226px;top:432px;width:2px;height:4px;background:#505050;box-shadow:0 0 0 0.6px #fff"></div>
<div style="left:1416px;top:424px;width:17px;height:17px;background:#f0f0f0"></div>
<svg style="position:absolute;left:1422px;top:431px" width="7" height="5" viewBox="0 0 7 5"><path d="M0.5 0.8H5.5L3 3.8Z" fill="#000" stroke="#000" stroke-width="0.6"/></svg>
<div style="left:1566px;top:424px;width:17px;height:17px;background:#f0f0f0"></div>
<svg style="position:absolute;left:1572px;top:431px" width="7" height="5" viewBox="0 0 7 5"><path d="M0.5 0.8H5.5L3 3.8Z" fill="#000" stroke="#000" stroke-width="0.6"/></svg>
<div style="left:1646px;top:424px;width:17px;height:17px;background:#f0f0f0"></div>
<svg style="position:absolute;left:1652px;top:431px" width="7" height="5" viewBox="0 0 7 5"><path d="M0.5 0.8H5.5L3 3.8Z" fill="#000" stroke="#000" stroke-width="0.6"/></svg>
<span class="t" style="left:1589.00px;top:428px;font-size:12px;color:#000;">0</span>
<span class="t" style="left:1668.00px;top:428px;font-size:12px;color:#000;">0</span>
<span class="t" style="left:1788.00px;top:428px;font-size:12px;color:#000;transform:scaleX(0.8640);transform-origin:0 0;">137 - White</span>
<span class="t" style="left:120.90px;top:450px;font-size:12px;color:#000;transform:scaleX(0.9293);transform-origin:0 0;">3</span>
<span class="t" style="left:202.00px;top:450px;font-size:12px;color:#000;transform:scaleX(0.8714);transform-origin:0 0;">Patio Bar</span>
<span class="t" style="left:288.00px;top:450px;font-size:12px;color:#000;transform:scaleX(0.8693);transform-origin:0 0;">0 - None</span>
<div style="left:422px;top:446px;width:20px;height:19px;background:#ececec"></div>
<div style="left:427px;top:454px;width:2px;height:4px;background:#505050;box-shadow:0 0 0 0.6px #fff"></div>
<div style="left:431px;top:454px;width:2px;height:4px;background:#505050;box-shadow:0 0 0 0.6px #fff"></div>
<div style="left:435px;top:454px;width:2px;height:4px;background:#505050;box-shadow:0 0 0 0.6px #fff"></div>
<div style="left:443px;top:446px;width:20px;height:19px;background:#ececec"></div>
<svg style="position:absolute;left:448px;top:449px" width="9" height="15" viewBox="0 0 9 15"><defs><linearGradient id="ag" x1="0" x2="1"><stop offset="0" stop-color="#2a2a2a"/><stop offset="1" stop-color="#8c8c8c"/></linearGradient></defs><path d="M1.5 7.5L7.8 1.5V13.5Z" fill="url(#ag)"/><path d="M7.8 1.5L1.5 7.5L7.8 13.5" fill="none" stroke="#111" stroke-width="1.3" stroke-linejoin="round"/></svg>
<span class="t" style="left:468.00px;top:450px;font-size:12px;color:#000;transform:scaleX(0.8693);transform-origin:0 0;">0 - None</span>
<div style="left:602px;top:446px;width:20px;height:19px;background:#ececec"></div>
<div style="left:607px;top:454px;width:2px;height:4px;background:#505050;box-shadow:0 0 0 0.6px #fff"></div>
<div style="left:611px;top:454px;width:2px;height:4px;background:#505050;box-shadow:0 0 0 0.6px #fff"></div>
<div style="left:615px;top:454px;width:2px;height:4px;background:#505050;box-shadow:0 0 0 0.6px #fff"></div>
<div style="left:623px;top:446px;width:20px;height:19px;background:#ececec"></div>
<svg style="position:absolute;left:628px;top:449px" width="9" height="15" viewBox="0 0 9 15"><defs><linearGradient id="ag" x1="0" x2="1"><stop offset="0" stop-color="#2a2a2a"/><stop offset="1" stop-color="#8c8c8c"/></linearGradient></defs><path d="M1.5 7.5L7.8 1.5V13.5Z" fill="url(#ag)"/><path d="M7.8 1.5L1.5 7.5L7.8 13.5" fill="none" stroke="#111" stroke-width="1.3" stroke-linejoin="round"/></svg>
<span class="t" style="left:648.00px;top:450px;font-size:12px;color:#000;transform:scaleX(0.8693);transform-origin:0 0;">0 - None</span>
<div style="left:752px;top:446px;width:20px;height:19px;background:#ececec"></div>
<div style="left:757px;top:454px;width:2px;height:4px;background:#505050;box-shadow:0 0 0 0.6px #fff"></div>
<div style="left:761px;top:454px;width:2px;height:4px;background:#505050;box-shadow:0 0 0 0.6px #fff"></div>
<div style="left:765px;top:454px;width:2px;height:4px;background:#505050;box-shadow:0 0 0 0.6px #fff"></div>
<div style="left:773px;top:446px;width:20px;height:19px;background:#ececec"></div>
<svg style="position:absolute;left:778px;top:449px" width="9" height="15" viewBox="0 0 9 15"><defs><linearGradient id="ag" x1="0" x2="1"><stop offset="0" stop-color="#2a2a2a"/><stop offset="1" stop-color="#8c8c8c"/></linearGradient></defs><path d="M1.5 7.5L7.8 1.5V13.5Z" fill="url(#ag)"/><path d="M7.8 1.5L1.5 7.5L7.8 13.5" fill="none" stroke="#111" stroke-width="1.3" stroke-linejoin="round"/></svg>
<div style="left:848px;top:449px;width:13px;height:13px;background:#fff;border:1px solid #333;box-sizing:border-box"></div>
<div style="left:1096px;top:446px;width:17px;height:17px;background:#f0f0f0"></div>
<svg style="position:absolute;left:1102px;top:453px" width="7" height="5" viewBox="0 0 7 5"><path d="M0.5 0.8H5.5L3 3.8Z" fill="#000" stroke="#000" stroke-width="0.6"/></svg>
<div style="left:1213px;top:446px;width:20px;height:19px;background:#ececec"></div>
<div style="left:1218px;top:454px;width:2px;height:4px;background:#505050;box-shadow:0 0 0 0.6px #fff"></div>
<div style="left:1222px;top:454px;width:2px;height:4px;background:#505050;box-shadow:0 0 0 0.6px #fff"></div>
<div style="left:1226px;top:454px;width:2px;height:4px;background:#505050;box-shadow:0 0 0 0.6px #fff"></div>
<div style="left:1416px;top:446px;width:17px;height:17px;background:#f0f0f0"></div>
<svg style="position:absolute;left:1422px;top:453px" width="7" height="5" viewBox="0 0 7 5"><path d="M0.5 0.8H5.5L3 3.8Z" fill="#000" stroke="#000" stroke-width="0.6"/></svg>
<div style="left:1566px;top:446px;width:17px;height:17px;background:#f0f0f0"></div>
<svg style="position:absolute;left:1572px;top:453px" width="7" height="5" viewBox="0 0 7 5"><path d="M0.5 0.8H5.5L3 3.8Z" fill="#000" stroke="#000" stroke-width="0.6"/></svg>
<div style="left:1646px;top:446px;width:17px;height:17px;background:#f0f0f0"></div>
<svg style="position:absolute;left:1652px;top:453px" width="7" height="5" viewBox="0 0 7 5"><path d="M0.5 0.8H5.5L3 3.8Z" fill="#000" stroke="#000" stroke-width="0.6"/></svg>
<span class="t" style="left:1589.00px;top:450px;font-size:12px;color:#000;">0</span>
<span class="t" style="left:1668.00px;top:450px;font-size:12px;color:#000;">0</span>
<span class="t" style="left:1788.00px;top:450px;font-size:12px;color:#000;transform:scaleX(0.8640);transform-origin:0 0;">137 - White</span>
<span class="t" style="left:120.90px;top:472px;font-size:12px;color:#000;transform:scaleX(0.9293);transform-origin:0 0;">4</span>
<span class="t" style="left:188.50px;top:472px;font-size:12px;color:#000;transform:scaleX(0.8821);transform-origin:0 0;">Special Events</span>
<span class="t" style="left:288.00px;top:472px;font-size:12px;color:#000;transform:scaleX(0.8693);transform-origin:0 0;">0 - None</span>
<div style="left:422px;top:468px;width:20px;height:19px;background:#ececec"></div>
<div style="left:427px;top:476px;width:2px;height:4px;background:#505050;box-shadow:0 0 0 0.6px #fff"></div>
<div style="left:431px;top:476px;width:2px;height:4px;background:#505050;box-shadow:0 0 0 0.6px #fff"></div>
<div style="left:435px;top:476px;width:2px;height:4px;background:#505050;box-shadow:0 0 0 0.6px #fff"></div>
<div style="left:443px;top:468px;width:20px;height:19px;background:#ececec"></div>
<svg style="position:absolute;left:448px;top:471px" width="9" height="15" viewBox="0 0 9 15"><defs><linearGradient id="ag" x1="0" x2="1"><stop offset="0" stop-color="#2a2a2a"/><stop offset="1" stop-color="#8c8c8c"/></linearGradient></defs><path d="M1.5 7.5L7.8 1.5V13.5Z" fill="url(#ag)"/><path d="M7.8 1.5L1.5 7.5L7.8 13.5" fill="none" stroke="#111" stroke-width="1.3" stroke-linejoin="round"/></svg>
<span class="t" style="left:468.00px;top:472px;font-size:12px;color:#000;transform:scaleX(0.8693);transform-origin:0 0;">0 - None</span>
<div style="left:602px;top:468px;width:20px;height:19px;background:#ececec"></div>
<div style="left:607px;top:476px;width:2px;height:4px;background:#505050;box-shadow:0 0 0 0.6px #fff"></div>
<div style="left:611px;top:476px;width:2px;height:4px;background:#505050;box-shadow:0 0 0 0.6px #fff"></div>
<div style="left:615px;top:476px;width:2px;height:4px;background:#505050;box-shadow:0 0 0 0.6px #fff"></div>
<div style="left:623px;top:468px;width:20px;height:19px;background:#ececec"></div>
<svg style="position:absolute;left:628px;top:471px" width="9" height="15" viewBox="0 0 9 15"><defs><linearGradient id="ag" x1="0" x2="1"><stop offset="0" stop-color="#2a2a2a"/><stop offset="1" stop-color="#8c8c8c"/></linearGradient></defs><path d="M1.5 7.5L7.8 1.5V13.5Z" fill="url(#ag)"/><path d="M7.8 1.5L1.5 7.5L7.8 13.5" fill="none" stroke="#111" stroke-width="1.3" stroke-linejoin="round"/></svg>
<span class="t" style="left:648.00px;top:472px;font-size:12px;color:#000;transform:scaleX(0.8693);transform-origin:0 0;">0 - None</span>
<div style="left:752px;top:468px;width:20px;height:19px;background:#ececec"></div>
<div style="left:757px;top:476px;width:2px;height:4px;background:#505050;box-shadow:0 0 0 0.6px #fff"></div>
<div style="left:761px;top:476px;width:2px;height:4px;background:#505050;box-shadow:0 0 0 0.6px #fff"></div>
<div style="left:765px;top:476px;width:2px;height:4px;background:#505050;box-shadow:0 0 0 0.6px #fff"></div>
<div style="left:773px;top:468px;width:20px;height:19px;background:#ececec"></div>
<svg style="position:absolute;left:778px;top:471px" width="9" height="15" viewBox="0 0 9 15"><defs><linearGradient id="ag" x1="0" x2="1"><stop offset="0" stop-color="#2a2a2a"/><stop offset="1" stop-color="#8c8c8c"/></linearGradient></defs><path d="M1.5 7.5L7.8 1.5V13.5Z" fill="url(#ag)"/><path d="M7.8 1.5L1.5 7.5L7.8 13.5" fill="none" stroke="#111" stroke-width="1.3" stroke-linejoin="round"/></svg>
<div style="left:848px;top:471px;width:13px;height:13px;background:#fff;border:1px solid #333;box-sizing:border-box"></div>
<div style="left:1096px;top:468px;width:17px;height:17px;background:#f0f0f0"></div>
<svg style="position:absolute;left:1102px;top:475px" width="7" height="5" viewBox="0 0 7 5"><path d="M0.5 0.8H5.5L3 3.8Z" fill="#000" stroke="#000" stroke-width="0.6"/></svg>
<div style="left:1213px;top:468px;width:20px;height:19px;background:#ececec"></div>
<div style="left:1218px;top:476px;width:2px;height:4px;background:#505050;box-shadow:0 0 0 0.6px #fff"></div>
<div style="left:1222px;top:476px;width:2px;height:4px;background:#505050;box-shadow:0 0 0 0.6px #fff"></div>
<div style="left:1226px;top:476px;width:2px;height:4px;background:#505050;box-shadow:0 0 0 0.6px #fff"></div>
<div style="left:1416px;top:468px;width:17px;height:17px;background:#f0f0f0"></div>
<svg style="position:absolute;left:1422px;top:475px" width="7" height="5" viewBox="0 0 7 5"><path d="M0.5 0.8H5.5L3 3.8Z" fill="#000" stroke="#000" stroke-width="0.6"/></svg>
<div style="left:1566px;top:468px;width:17px;height:17px;background:#f0f0f0"></div>
<svg style="position:absolute;left:1572px;top:475px" width="7" height="5" viewBox="0 0 7 5"><path d="M0.5 0.8H5.5L3 3.8Z" fill="#000" stroke="#000" stroke-width="0.6"/></svg>
<div style="left:1646px;top:468px;width:17px;height:17px;background:#f0f0f0"></div>
<svg style="position:absolute;left:1652px;top:475px" width="7" height="5" viewBox="0 0 7 5"><path d="M0.5 0.8H5.5L3 3.8Z" fill="#000" stroke="#000" stroke-width="0.6"/></svg>
<span class="t" style="left:1589.00px;top:472px;font-size:12px;color:#000;">0</span>
<span class="t" style="left:1668.00px;top:472px;font-size:12px;color:#000;">0</span>
<span class="t" style="left:1788.00px;top:472px;font-size:12px;color:#000;transform:scaleX(0.8640);transform-origin:0 0;">137 - White</span>
<span class="t" style="left:120.90px;top:494px;font-size:12px;color:#000;transform:scaleX(0.9293);transform-origin:0 0;">5</span>
<span class="t" style="left:205.00px;top:494px;font-size:12px;color:#000;transform:scaleX(0.9000);transform-origin:0 0;">VIP Bar</span>
<span class="t" style="left:288.00px;top:494px;font-size:12px;color:#000;transform:scaleX(0.8693);transform-origin:0 0;">0 - None</span>
<div style="left:422px;top:490px;width:20px;height:19px;background:#ececec"></div>
<div style="left:427px;top:498px;width:2px;height:4px;background:#505050;box-shadow:0 0 0 0.6px #fff"></div>
<div style="left:431px;top:498px;width:2px;height:4px;background:#505050;box-shadow:0 0 0 0.6px #fff"></div>
<div style="left:435px;top:498px;width:2px;height:4px;background:#505050;box-shadow:0 0 0 0.6px #fff"></div>
<div style="left:443px;top:490px;width:20px;height:19px;background:#ececec"></div>
<svg style="position:absolute;left:448px;top:493px" width="9" height="15" viewBox="0 0 9 15"><defs><linearGradient id="ag" x1="0" x2="1"><stop offset="0" stop-color="#2a2a2a"/><stop offset="1" stop-color="#8c8c8c"/></linearGradient></defs><path d="M1.5 7.5L7.8 1.5V13.5Z" fill="url(#ag)"/><path d="M7.8 1.5L1.5 7.5L7.8 13.5" fill="none" stroke="#111" stroke-width="1.3" stroke-linejoin="round"/></svg>
<span class="t" style="left:468.00px;top:494px;font-size:12px;color:#000;transform:scaleX(0.8693);transform-origin:0 0;">0 - None</span>
<div style="left:602px;top:490px;width:20px;height:19px;background:#ececec"></div>
<div style="left:607px;top:498px;width:2px;height:4px;background:#505050;box-shadow:0 0 0 0.6px #fff"></div>
<div style="left:611px;top:498px;width:2px;height:4px;background:#505050;box-shadow:0 0 0 0.6px #fff"></div>
<div style="left:615px;top:498px;width:2px;height:4px;background:#505050;box-shadow:0 0 0 0.6px #fff"></div>
<div style="left:623px;top:490px;width:20px;height:19px;background:#ececec"></div>
<svg style="position:absolute;left:628px;top:493px" width="9" height="15" viewBox="0 0 9 15"><defs><linearGradient id="ag" x1="0" x2="1"><stop offset="0" stop-color="#2a2a2a"/><stop offset="1" stop-color="#8c8c8c"/></linearGradient></defs><path d="M1.5 7.5L7.8 1.5V13.5Z" fill="url(#ag)"/><path d="M7.8 1.5L1.5 7.5L7.8 13.5" fill="none" stroke="#111" stroke-width="1.3" stroke-linejoin="round"/></svg>
<span class="t" style="left:648.00px;top:494px;font-size:12px;color:#000;transform:scaleX(0.8693);transform-origin:0 0;">0 - None</span>
<div style="left:752px;top:490px;width:20px;height:19px;background:#ececec"></div>
<div style="left:757px;top:498px;width:2px;height:4px;background:#505050;box-shadow:0 0 0 0.6px #fff"></div>
<div style="left:761px;top:498px;width:2px;height:4px;background:#505050;box-shadow:0 0 0 0.6px #fff"></div>
<div style="left:765px;top:498px;width:2px;height:4px;background:#505050;box-shadow:0 0 0 0.6px #fff"></div>
<div style="left:773px;top:490px;width:20px;height:19px;background:#ececec"></div>
<svg style="position:absolute;left:778px;top:493px" width="9" height="15" viewBox="0 0 9 15"><defs><linearGradient id="ag" x1="0" x2="1"><stop offset="0" stop-color="#2a2a2a"/><stop offset="1" stop-color="#8c8c8c"/></linearGradient></defs><path d="M1.5 7.5L7.8 1.5V13.5Z" fill="url(#ag)"/><path d="M7.8 1.5L1.5 7.5L7.8 13.5" fill="none" stroke="#111" stroke-width="1.3" stroke-linejoin="round"/></svg>
<div style="left:848px;top:493px;width:13px;height:13px;background:#fff;border:1px solid #333;box-sizing:border-box"></div>
<div style="left:1096px;top:490px;width:17px;height:17px;background:#f0f0f0"></div>
<svg style="position:absolute;left:1102px;top:497px" width="7" height="5" viewBox="0 0 7 5"><path d="M0.5 0.8H5.5L3 3.8Z" fill="#000" stroke="#000" stroke-width="0.6"/></svg>
<div style="left:1213px;top:490px;width:20px;height:19px;background:#ececec"></div>
<div style="left:1218px;top:498px;width:2px;height:4px;background:#505050;box-shadow:0 0 0 0.6px #fff"></div>
<div style="left:1222px;top:498px;width:2px;height:4px;background:#505050;box-shadow:0 0 0 0.6px #fff"></div>
<div style="left:1226px;top:498px;width:2px;height:4px;background:#505050;box-shadow:0 0 0 0.6px #fff"></div>
<div style="left:1416px;top:490px;width:17px;height:17px;background:#f0f0f0"></div>
<svg style="position:absolute;left:1422px;top:497px" width="7" height="5" viewBox="0 0 7 5"><path d="M0.5 0.8H5.5L3 3.8Z" fill="#000" stroke="#000" stroke-width="0.6"/></svg>
<div style="left:1566px;top:490px;width:17px;height:17px;background:#f0f0f0"></div>
<svg style="position:absolute;left:1572px;top:497px" width="7" height="5" viewBox="0 0 7 5"><path d="M0.5 0.8H5.5L3 3.8Z" fill="#000" stroke="#000" stroke-width="0.6"/></svg>
<div style="left:1646px;top:490px;width:17px;height:17px;background:#f0f0f0"></div>
<svg style="position:absolute;left:1652px;top:497px" width="7" height="5" viewBox="0 0 7 5"><path d="M0.5 0.8H5.5L3 3.8Z" fill="#000" stroke="#000" stroke-width="0.6"/></svg>
<span class="t" style="left:1589.00px;top:494px;font-size:12px;color:#000;">0</span>
<span class="t" style="left:1668.00px;top:494px;font-size:12px;color:#000;">0</span>
<span class="t" style="left:1788.00px;top:494px;font-size:12px;color:#000;transform:scaleX(0.8640);transform-origin:0 0;">137 - White</span>
<div style="left:44px;top:960px;width:1830px;height:17px;background:#fff"></div>
<div style="left:44px;top:961px;width:1830px;height:15px;background:#f0f0f0"></div>
<div style="left:61px;top:961px;width:1614px;height:15px;background:#cdcdcd"></div>
<svg style="position:absolute;left:48px;top:964px" width="8" height="10" viewBox="0 0 8 10"><path d="M5.8 1.2L2.3 4.5L5.8 7.8" fill="none" stroke="#606060" stroke-width="2.2"/></svg>
<svg style="position:absolute;left:1862px;top:964px" width="8" height="10" viewBox="0 0 8 10"><path d="M2.2 1.2L5.7 4.5L2.2 7.8" fill="none" stroke="#606060" stroke-width="2.2"/></svg>
<div style="left:345px;top:192px;width:124px;height:25px;border:2px solid #00cc00;box-sizing:border-box;filter:drop-shadow(3px 3px 2px rgba(0,0,0,0.55))"></div>
<div style="left:198px;top:315px;width:122px;height:38px;border:2px solid #0000ff;box-sizing:border-box;filter:drop-shadow(3px 3px 2px rgba(0,0,0,0.55))"></div>
<div style="left:39px;top:360px;width:280px;height:169px;border:2px solid #ffff00;box-sizing:border-box;filter:drop-shadow(3px 3px 2px rgba(0,0,0,0.55))"></div>
<div style="left:0px;top:1023px;width:1919px;height:27px;background:linear-gradient(#fdfdfd,#f2f2f2)"></div>
<div style="left:1284px;top:1024px;width:1px;height:26px;background:#d0d0d0"></div>
<div style="left:1440px;top:1024px;width:1px;height:26px;background:#d0d0d0"></div>
<div style="left:1596px;top:1024px;width:1px;height:26px;background:#d0d0d0"></div>
<div style="left:1752px;top:1024px;width:1px;height:26px;background:#d0d0d0"></div>
<span class="t" style="left:4.00px;top:1030px;font-size:11px;color:#000;letter-spacing:-0.028px;">19 record(s) read.</span>
<div style="left:1447px;top:1025px;width:146px;height:25px;overflow:hidden"><span class="t" style="left:-0.5px;top:6px;font-size:11px;letter-spacing:-0.05px">mtu5-ohsim.oracleindustry.com</span></div>
<svg style="position:absolute;left:1756px;top:1028px" width="8" height="16" viewBox="0 0 8 16"><g shape-rendering="crispEdges"><rect x="3" y="1" width="1" height="2" fill="#555"/><rect x="4" y="2" width="1" height="2" fill="#f0e000"/><rect x="2" y="4" width="1" height="4" fill="#222"/><rect x="5" y="4" width="1" height="4" fill="#222"/><rect x="3" y="4" width="2" height="4" fill="#fff"/><rect x="2" y="9" width="4" height="1" fill="#1a1a1a"/><rect x="1" y="10" width="6" height="5" fill="#0a0a20"/><rect x="2" y="10" width="4" height="4" fill="#1060d0"/><rect x="3" y="10" width="1" height="1" fill="#cde"/></g></svg>
<span class="t" style="left:1766.00px;top:1031px;font-size:11px;color:#000;letter-spacing:-0.138px;">Tmeagher (Meagher, Trisha)</span>
</body></html>
